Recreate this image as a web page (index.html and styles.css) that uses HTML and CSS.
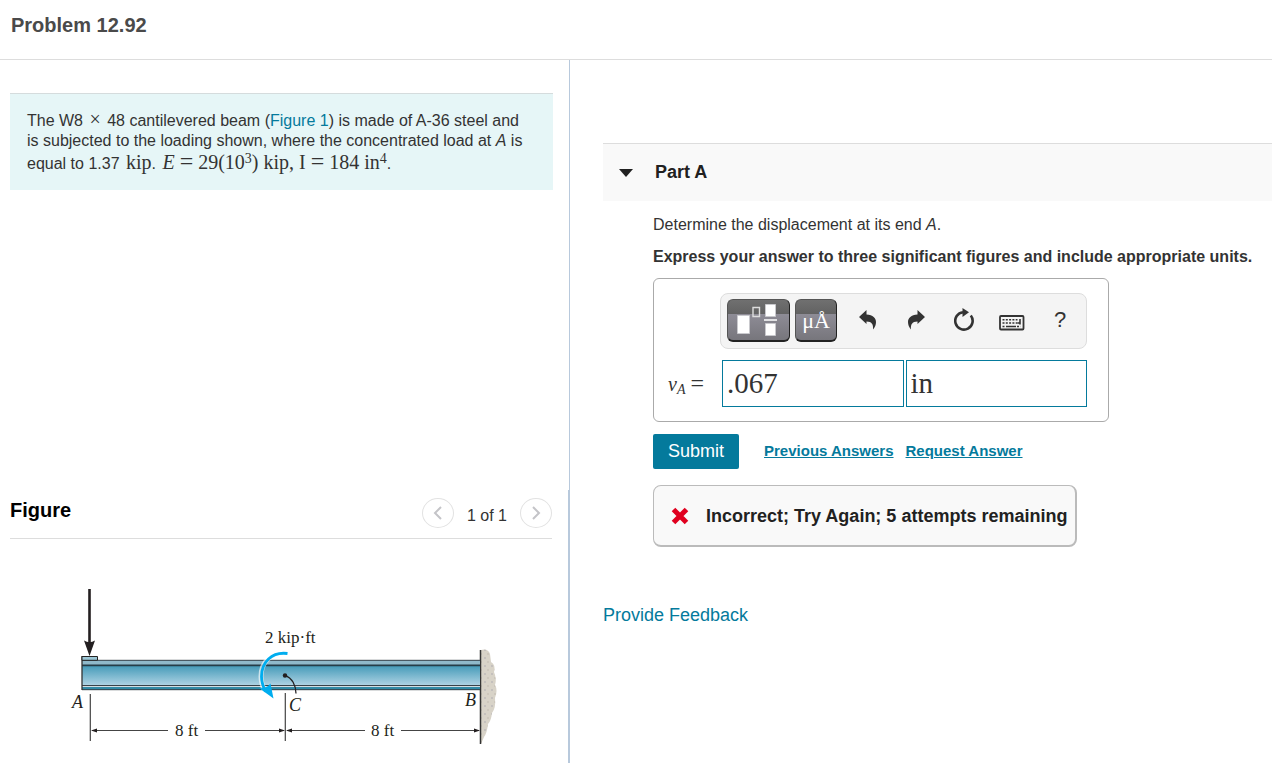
FILE: index.html
```html
<!DOCTYPE html>
<html lang="en">
<head>
<meta charset="utf-8">
<title>Problem 12.92</title>
<link rel="stylesheet" href="styles.css">
</head>
<body>
<header class="page-header"><h1>Problem 12.92</h1></header>
<main class="columns">
  <div class="left">
    <section class="intro">
      <p class="prompt">The W8 <span class="times">×</span> 48 cantilevered beam (<a href="#figure">Figure 1</a>) is made of A-36 steel and is subjected to the loading shown, where the concentrated load at <i>A</i> is equal to 1.37 <span class="math">kip</span>. <span class="math"><i>E</i> <span class="eq">=</span> 29(10<sup>3</sup>) kip, I <span class="eq">=</span> 184 in<sup>4</sup></span>.</p>
    </section>
    <section class="figure-pane" id="figure">
      <div class="figure-bar">
        <h2>Figure</h2>
        <nav class="pager" aria-label="Figures">
          <button type="button" aria-label="Previous figure"><svg width="10" height="14" viewBox="0 0 10 14"><path d="M8 1 2 7l6 6"/></svg></button>
          <span>1 of 1</span>
          <button type="button" aria-label="Next figure"><svg width="10" height="14" viewBox="0 0 10 14"><path d="m2 1 6 6-6 6"/></svg></button>
        </nav>
      </div>
      <svg class="beam" width="542" height="175" viewBox="10 578 542 175" role="img" aria-label="Cantilevered beam">
        <defs>
          <linearGradient id="web" x1="0" y1="0" x2="0" y2="1"><stop offset="0" stop-color="#469bb9"/><stop offset="1" stop-color="#add2e3"/></linearGradient>
          <pattern id="grain" width="7" height="8" patternUnits="userSpaceOnUse"><circle cx="2" cy="2" r=".8" fill="#aaa9ae"/><circle cx="5" cy="6" r=".7" fill="#b8b2a5"/></pattern>
        </defs>
        <path fill="#d8d3c8" d="M481 650q7-2 9 4l1 8q5 3 3 10 3 7 1 13 3 5 0 13 1 10-3 15-1 8-4 11-1 9-4 13l-3 7z"/>
        <path fill="url(#grain)" d="M481 650q7-2 9 4l1 8q5 3 3 10 3 7 1 13 3 5 0 13 1 10-3 15-1 8-4 11-1 9-4 13l-3 7z"/>
        <path d="M480.500 650v94" stroke="#333" stroke-width="1.500"/>
        <path d="M82 660h398v30H82z" fill="#8fb9ca"/>
        <path d="M82 666h398v19H82z" fill="url(#web)"/>
        <path d="M82 685h398v2H82z" fill="#d4dde1"/>
        <path d="M82 687h398v3H82z" fill="#328ba7"/>
        <path d="M82 665.300h398" stroke="#253d48" stroke-width="1.800"/>
        <path d="M82 660.300h398M82 685.500h398M82 689.700h398" stroke="#384249"/>
        <path d="M82 656v34" stroke="#333" stroke-width="1.300"/>
        <path d="M82 656.500h15.500v3.800H82z" fill="#9bc6d5" stroke="#222"/>
        <path d="M89.500 589v56" stroke="#231f20" stroke-width="2.600"/>
        <path d="M84 640.500q5.500 3.500 11 0L89.500 656z" fill="#231f20"/>
        <path d="M287 653.500c-16-2-26 9-26 23 0 6 2 11 4 15" fill="none" stroke="#fff" stroke-width="5" opacity=".65"/>
        <path d="M287.500 653.500c-16-2-26 9-26 23 0 6 2 11 4 15" fill="none" stroke="#00adef" stroke-width="2.800"/>
        <path d="M259 688q7 1 11.500-4.500l3 15z" fill="#00adef"/>
        <circle cx="285" cy="675.500" r="2.200" fill="#231f20"/>
        <path d="M285 675.500c7 2 11 10 11 18" fill="none" stroke="#231f20" stroke-width="1.300"/>
        <g stroke="#444" stroke-width="1.200" fill="none"><path d="M90.300 694v47M285.300 693v48"/><path d="M92 730.500h76M205 730.500h79M287 730.500h78M401 730.500h78"/></g>
        <path fill="#231f20" d="m91 730.500 6-2v4zM285 730.500l-6-2v4zM286 730.500l6-2v4zM480 730.500l-6-2v4z"/>
        <g class="beam-text">
          <text x="265" y="643">2 kip·ft</text>
          <text x="175" y="736">8 ft</text>
          <text x="371" y="736">8 ft</text>
          <text class="point" x="72" y="708">A</text>
          <text class="point" x="289" y="711">C</text>
          <text class="point" x="465" y="706">B</text>
        </g>
      </svg>
    </section>
  </div>
  <div class="right">
    <section>
      <h2 class="part-title"><button type="button" aria-expanded="true"><svg width="14" height="8" viewBox="0 0 14 8"><path fill="#212121" d="M0 0h14L7 8z"/></svg>Part A</button></h2>
      <div class="part-body">
        <p>Determine the displacement at its end <i>A</i>.</p>
        <p class="instruction">Express your answer to three significant figures and include appropriate units.</p>
        <form class="answer">
          <div class="toolbar" role="toolbar" aria-label="Math tools">
            <button class="dark templates" type="button" aria-label="Templates"><svg width="61" height="40" viewBox="0 0 61 40"><g fill="#fff" stroke="#c9c9cd"><path d="M9.500 15.500h12v18h-12zM37.500 4.500h10v12h-10zM37.500 23.500h10v12h-10z"/><path fill="none" stroke="#ddd" stroke-width="1.400" d="M25 7.500h6.500v9H25z"/></g><path d="M36 20h13" stroke="#fff" stroke-width="1.500"/></svg></button>
            <button class="dark units" type="button" aria-label="Units">μÅ</button>
            <button class="plain" type="button" aria-label="Undo"><svg width="18" height="20" viewBox="0 0 18 20"><path d="M0 7 7.500 0v4.500C14 5 17 8 17 12c0 3-1 5-3 7.500.5-5-1-8-6.500-8V14z"/></svg></button>
            <button class="plain" type="button" aria-label="Redo"><svg width="18" height="20" viewBox="0 0 18 20"><path d="M18 7 10.500 0v4.500C4 5 1 8 1 12c0 3 1 5 3 7.500-.5-5 1-8 6.500-8V14z"/></svg></button>
            <button class="plain" type="button" aria-label="Reset"><svg width="20" height="24" viewBox="0 0 20 24"><path d="M9 4.200A8.700 8.700 0 1 0 16.800 7.500" fill="none" stroke="#333" stroke-width="2.600"/><path d="M8.500 0 15 4.300 8.500 9z"/></svg></button>
            <button class="plain keyboard" type="button" aria-label="Keyboard"><svg width="26" height="16" viewBox="0 0 26 16"><rect x="1" y="1" width="23.500" height="13.500" rx="1" fill="none" stroke="#333" stroke-width="1.800"/><g fill="none" stroke="#333" stroke-width="1.600"><path stroke-dasharray="2 1.300" d="M3.500 4.800h15M3.500 8h15M3.500 11.500h3M18 11.500h3.500"/><path d="M7 11.500h10M21 4v5.500M18.500 8h3"/></g></svg></button>
            <button class="plain help" type="button" aria-label="Help">?</button>
          </div>
          <div class="answer-row">
            <label class="variable" for="value"><i>v</i><sub>A</sub> <span class="eq">=</span></label>
            <input id="value" type="text" value=".067">
            <input type="text" value="in" aria-label="Units">
          </div>
        </form>
        <div class="actions">
          <button class="submit" type="button">Submit</button>
          <a href="#">Previous Answers</a>
          <a href="#">Request Answer</a>
        </div>
        <div class="result" role="status">
          <svg width="18" height="18" viewBox="0 0 18 18"><path d="m2.500 2.500 13 13M15.500 2.500l-13 13" stroke="#e0001f" stroke-width="5"/></svg>
          <span>Incorrect; Try Again; 5 attempts remaining</span>
        </div>
      </div>
    </section>
    <a class="feedback" href="#">Provide Feedback</a>
  </div>
</main>
</body>
</html>
```

FILE: styles.css
```css
* { box-sizing: border-box; }
body {
  margin: 0;
  min-height: 100vh;
  display: flex;
  flex-direction: column;
  background: #fff;
  color: #333;
  font: 16px/20px "Liberation Sans", Arial, sans-serif;
}
h1, h2, p { margin: 0; }
button, input { font: inherit; color: inherit; }
button { padding: 0; border: 0; background: none; cursor: pointer; }
a { color: #047a9c; text-decoration: none; }
.page-header { padding: 13px 11px 22px; border-bottom: 1px solid #ddd; }
.page-header h1 { font-size: 20px; line-height: 24px; color: #4a4a4a; }
.columns { flex: 1; display: grid; grid-template-columns: 95fr 117fr; }

.left { display: flex; flex-direction: column; }
.intro { flex: 1; padding: 33px 16px 33px 10px; border-right: 1px solid #b8c9dc; }
.prompt { padding: 17px 20px 16px 17px; border-top: 1px solid #d5dcdd; background: #e6f6f7; }
.times { margin: 0 2px; font: 20px/16px "Liberation Serif", serif; }
.math { font: 20px/22px "Liberation Serif", serif; margin-left: 2px; }
.math sup { font-size: 14px; line-height: 0; vertical-align: 6px; }
.eq { font: 24px/16px "Liberation Serif", serif; }
.figure-pane { padding: 8px 16px 10px 10px; border-right: 2px solid #b8c9dc; }
.figure-bar { display: flex; justify-content: space-between; padding-bottom: 10px; border-bottom: 1px solid #ddd; }
.figure-bar h2 { font-size: 20px; line-height: 24px; color: #000; }
.pager { display: flex; align-items: center; gap: 13px; }
.pager span { padding-top: 5px; }
.pager button { display: grid; place-items: center; width: 32px; height: 30px; border: 1px solid #e2e2e2; border-radius: 50%; }
.pager path { fill: none; stroke: #c4c4c8; stroke-width: 2; }
.beam { display: block; max-width: 100%; height: auto; margin-top: 39px; }
.beam-text { font: 17px "Liberation Serif", serif; fill: #231f20; }
.beam-text .point { font-size: 18px; font-style: italic; }

.right { padding: 83px 0 20px 33px; min-width: 0; }
.part-title { border-top: 1px solid #ddd; background: #f9f9f9; font-size: 18px; }
.part-title button { display: flex; align-items: center; gap: 22px; width: 100%; padding: 18px 16px; line-height: 21px; font-weight: bold; color: #212121; }
.part-body { padding: 14px 0 0 50px; }
.instruction { margin-top: 12px; font-weight: bold; }
.answer { width: 456px; max-width: 100%; margin-top: 11px; padding: 14px 21px 14px 14px; border: 1px solid #aaa; border-radius: 6px; }
.toolbar { display: flex; align-items: center; margin-left: 52px; height: 56px; padding: 0 0 2px 6px; border: 1px solid #ddd; border-radius: 8px; background: #f4f4f4; }
.dark { display: grid; place-items: center; height: 43px; border: 1px solid #555; border-right-color: #222; border-bottom: 2px solid #222; border-radius: 6px; background: linear-gradient(#707070, #626262 35%, #8e8c96 35%, #77767c); color: #fff; }
.templates { width: 63px; }
.units { width: 42px; margin: 0 7px 0 5px; padding-top: 3px; font: 22px/36px "Liberation Serif", serif; }
.plain { display: grid; place-items: center; width: 48px; height: 40px; fill: #333; }
.keyboard { padding-top: 5px; }
.help { font-size: 22px; }
.answer-row { display: grid; grid-template-columns: 52px 1fr 1fr; column-gap: 2px; align-items: center; margin-top: 11px; }
.answer-row input { width: 100%; min-width: 0; height: 47px; padding: 0 4px; border: 1px solid #047a9c; border-radius: 0; background: #fff; font: 29px "Liberation Serif", serif; }
.variable { font: 20px/24px "Liberation Serif", serif; white-space: nowrap; }
.variable sub { font-size: 14px; font-style: italic; line-height: 0; vertical-align: -3px; }
.actions { display: flex; align-items: center; gap: 12px; margin-top: 12px; }
.submit { margin-right: 13px; padding: 7px 15px 8px; border-radius: 2px; background: #047a9c; color: #fff; font-size: 18px; }
.actions a { padding-bottom: 1px; font-size: 15px; font-weight: bold; text-decoration: underline; }
.result { display: flex; align-items: center; gap: 17px; width: fit-content; margin-top: 16px; padding: 20px 8px 19px 17px; border: 1px solid #bbb; border-bottom-width: 2px; border-right-width: 2px; border-radius: 8px; background: #f9f9f9; color: #212121; font-size: 18px; font-weight: bold; }
.feedback { display: inline-block; margin-top: 58px; font-size: 18px; }
```
